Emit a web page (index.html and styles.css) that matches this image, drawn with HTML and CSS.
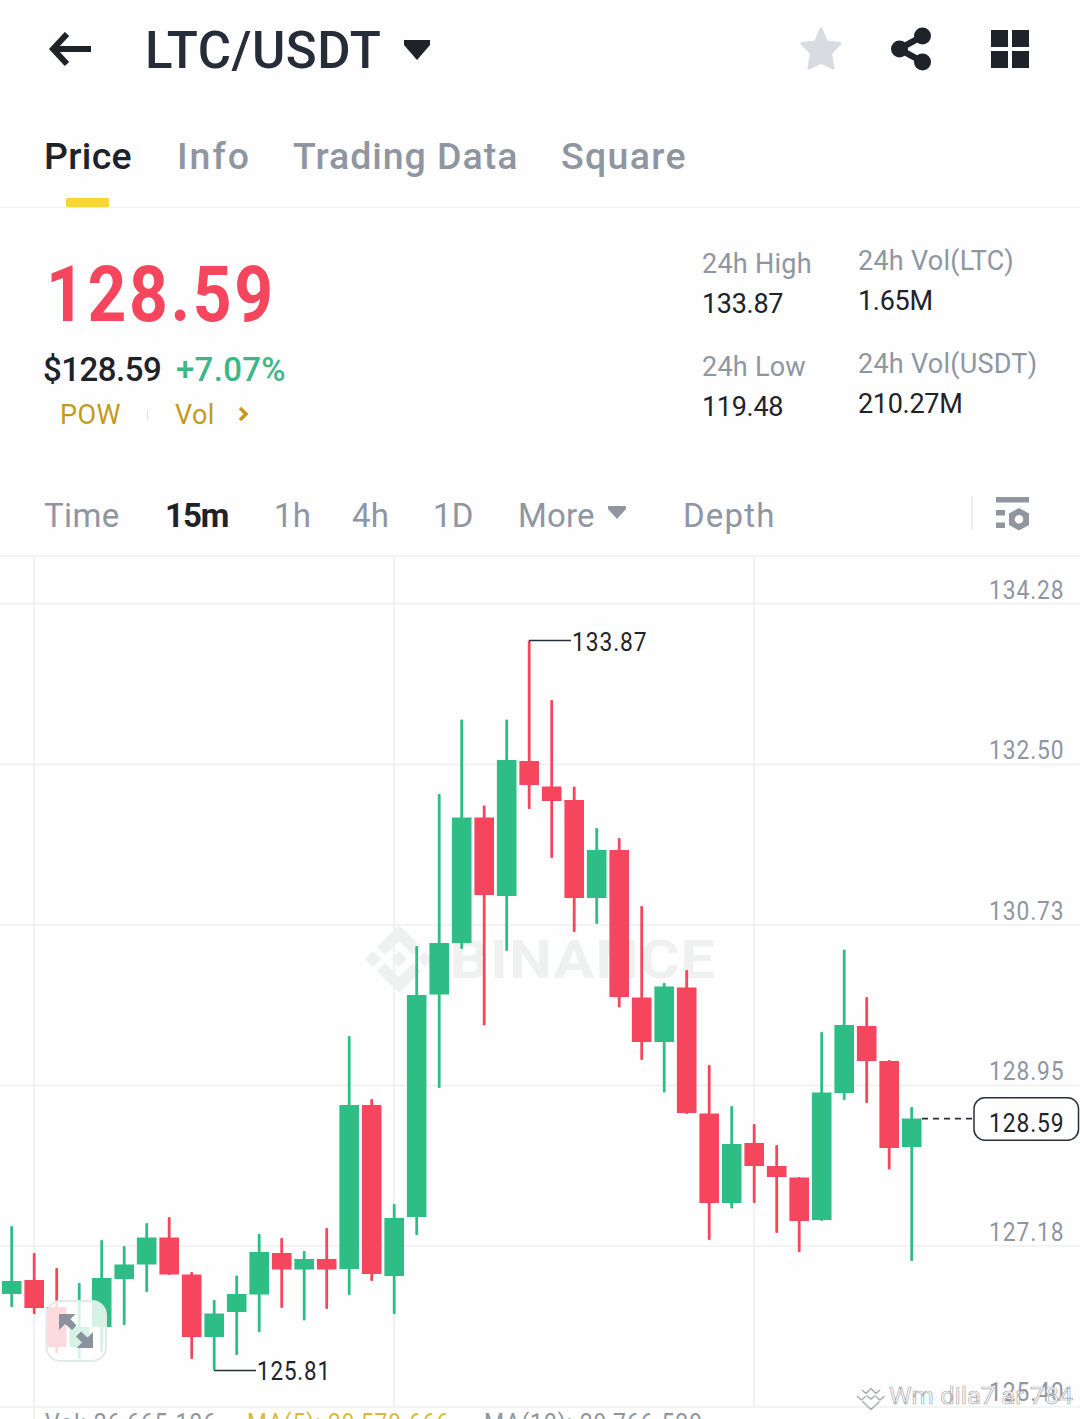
FILE: index.html
```html
<!DOCTYPE html>
<html lang="en">
<head>
<meta charset="utf-8">
<title>LTC/USDT</title>
<link rel="stylesheet" href="styles.css">
</head>
<body>
<header class="header">
  <svg class="back" viewBox="0 0 42 34" width="42" height="34"><path d="M18 2 4 17l14 15M4 17h38" fill="none" stroke="#1e2329" stroke-width="6"/></svg>
  <h1 class="pair">LTC/USDT</h1>
  <svg class="pair-caret" viewBox="0 0 26 20" width="26" height="20"><path d="M0 0h26v5L13 20 0 5z" fill="#1e2329"/></svg>
  <div class="actions">
    <svg viewBox="0 0 42 44" width="42" height="44"><path d="M21 2 26.500 15 40 16.500 30.500 26.500 33 41 21 35.500 9 41 11.500 26.500 2 16.500 15.500 15z" fill="#d8dce1" stroke="#d8dce1" stroke-width="3" stroke-linejoin="round"/></svg>
    <svg viewBox="0 0 40 44" width="40" height="44"><path d="M32 9 8 22l24 13" fill="none" stroke="#1e2329" stroke-width="6.500"/><g fill="#1e2329"><circle cx="31.500" cy="9" r="8.500"/><circle cx="8.500" cy="22" r="8.500"/><circle cx="31.500" cy="35" r="8.500"/></g></svg>
    <svg viewBox="0 0 38 38" width="38" height="38"><path d="M0 0h17v17H0zM21 0h17v17H21zM0 21h17v17H0zM21 21h17v17H21z" fill="#1e2329"/></svg>
  </div>
</header>

<nav class="tabs">
  <span class="tab tab-active">Price</span>
  <span class="tab tab-info">Info</span>
  <span class="tab tab-data">Trading Data</span>
  <span class="tab tab-square">Square</span>
</nav>

<section class="summary">
  <div class="quote">
    <div class="last">128.59</div>
    <div class="change"><span class="usd">$128.59</span><span class="pct">+7.07%</span></div>
    <div class="tags"><span class="tag-pow">POW</span><i class="tag-sep"></i><span class="tag-vol">Vol</span>
      <svg viewBox="0 0 11 16" width="11" height="16"><path d="M2 2l6 6-6 6" fill="none" stroke="#c29b1e" stroke-width="3.600"/></svg></div>
  </div>
  <div class="stats stats-range">
    <dl><dt>24h High</dt><dd>133.87</dd></dl>
    <dl><dt>24h Low</dt><dd>119.48</dd></dl>
  </div>
  <div class="stats stats-volume">
    <dl><dt>24h Vol(LTC)</dt><dd>1.65M</dd></dl>
    <dl><dt>24h Vol(USDT)</dt><dd>210.27M</dd></dl>
  </div>
</section>

<nav class="intervals">
  <span>Time</span>
  <span class="interval-active">15m</span>
  <span>1h</span>
  <span>4h</span>
  <span>1D</span>
  <span class="more">More <svg viewBox="0 0 18 13" width="18" height="13"><path d="M0 0h18v3L9 13 0 3z" fill="#8f96a0"/></svg></span>
  <span class="depth">Depth</span>
  <i class="divider"></i>
  <svg class="settings" viewBox="0 0 34 34" width="34" height="34"><g fill="#8f96a0"><path d="M0 0h33v5.500H0zM0 13h9v5.500H0zM0 25.500h9V31H0z"/><path fill-rule="evenodd" d="M23 11l10 5.500v11.500l-10 5.500-10-5.500V16.500zM23 18a4.300 4.300 0 1 0 0 8.600 4.300 4.300 0 0 0 0-8.600z"/></g></svg>
</nav>

<svg class="chart" viewBox="0 555 1080 864" width="1080" height="864">
  <path class="grid" d="M0 556H1080M0 603.500H1080M0 764.500H1080M0 925H1080M0 1085.500H1080M0 1246H1080M0 1407H1080M34 557V1419M394 557V1407M754 557V1407"/>
  <g class="brand">
    <path d="M399 925l22 22-8 8-14-14-14 14-8-8zM399 993l22-22-8-8-14 14-14-14-8 8zM399 951l8 8-8 8-8-8zM373 951l8 8-8 8-8-8zM425 951l8 8-8 8-8-8z"/>
    <text x="450" y="978" textLength="266" lengthAdjust="spacingAndGlyphs">BINANCE</text>
  </g>
  <g id="candles"></g>
  <g class="axis">
    <text x="989" y="598.500" textLength="75.500" lengthAdjust="spacingAndGlyphs">134.28</text>
    <text x="989" y="758.500" textLength="75.500" lengthAdjust="spacingAndGlyphs">132.50</text>
    <text x="989" y="919.500" textLength="75.500" lengthAdjust="spacingAndGlyphs">130.73</text>
    <text x="989" y="1079.500" textLength="75.500" lengthAdjust="spacingAndGlyphs">128.95</text>
    <text x="989" y="1240.500" textLength="75.500" lengthAdjust="spacingAndGlyphs">127.18</text>
    <text x="989" y="1400.500" textLength="75.500" lengthAdjust="spacingAndGlyphs">125.40</text>
    <text x="45" y="1431.500" textLength="172" lengthAdjust="spacingAndGlyphs">Vol: 26,665.106</text>
    <text class="ma5" x="247" y="1431.500" textLength="203" lengthAdjust="spacingAndGlyphs">MA(5): 29,579.666</text>
    <text x="484" y="1431.500" textLength="219" lengthAdjust="spacingAndGlyphs">MA(10): 29,766.529</text>
  </g>
  <path class="pointer" d="M529 640.500H571M214 1370.500H256"/>
  <path class="pointer dashed" d="M922 1118.700H973"/>
  <rect class="pricetag" x="974" y="1097.700" width="104.500" height="42.500" rx="11"/>
  <g class="mark">
    <text x="572" y="650.500" textLength="75.500" lengthAdjust="spacingAndGlyphs">133.87</text>
    <text x="257" y="1380" textLength="74" lengthAdjust="spacingAndGlyphs">125.81</text>
    <text x="989" y="1131.500" textLength="75.500" lengthAdjust="spacingAndGlyphs">128.59</text>
  </g>
  <rect class="expand" x="46.500" y="1301" width="59.500" height="60" rx="14"/>
  <path fill="#8b929d" d="M59 1314h16.500l-5 5 6 6.500-4.500 4.500-7-6-6 6zM93 1348H76.500l5.500-5.500-6-6 5-5 6.500 6 5.500-5.500z"/>
  <g class="author">
    <path d="M862 1390l4 3.500 5-5 5 5 4-3.500M857 1396l4.500 4 4-3.500M866.500 1395.500l4.500 3.500 4.500-3.500M876 1396.500l4 3.500 4.500-4M862.500 1401.500l8.500 8 8.500-8"/>
    <text x="889" y="1403.500" textLength="184" lengthAdjust="spacingAndGlyphs">Wm dila7 ar 784</text>
  </g>
</svg>
<script src="chart.js"></script>
</body>
</html>
```
FILE: styles.css
```css
* { box-sizing: border-box; margin: 0; padding: 0; }
body {
  width: 1080px;
  height: 1419px;
  overflow: hidden;
  background: #fefefe;
  color: #1e2329;
  font-family: Roboto, "Liberation Sans", sans-serif;
}
svg { display: block; flex: none; }

.header { display: flex; align-items: center; height: 97px; padding: 0 51px 0 49px; }
.pair { margin-left: 54px; padding-top: 5px; width: 236px; font-size: 51px; line-height: 60px; font-weight: 500; letter-spacing: 0.5px; color: #262c38; white-space: nowrap; }
.pair-caret { margin: 2px 0 0 23px; }
.actions { display: flex; align-items: center; margin-left: auto; }
.actions svg + svg { margin-left: 49px; }
.actions svg + svg + svg { margin-left: 60px; }

.tabs { display: grid; grid-template-columns: 132px 117px 268px 1fr; height: 111px; padding: 39px 0 0 44px; border-bottom: 1px solid #eef0f0; }
.tab { position: relative; font-size: 37.5px; line-height: 40px; font-weight: 500; color: #8f96a1; white-space: nowrap; }
.tab-active { color: #1e2329; letter-spacing: 0.3px; }
.tab-info { padding-left: 1px; letter-spacing: 2px; }
.tab-data { letter-spacing: 0.95px; }
.tab-square { letter-spacing: 1.3px; }
.tab-active::after { content: ""; position: absolute; left: 22px; bottom: 0; width: 43px; height: 9px; border-radius: 1px; background: #fad536; }

.summary { display: flex; height: 267px; padding: 36px 0 0 43px; }
.quote { width: 659px; padding-top: 11px; }
.last { margin-left: 3px; font-size: 77px; line-height: 80px; font-weight: 700; color: #f6465d; transform: scaleX(0.88); transform-origin: 0 0; letter-spacing: 3px; }
.change { display: flex; margin-top: 15px; font-size: 33px; line-height: 40px; font-weight: 500; }
.usd { width: 133px; letter-spacing: -0.5px; }
.pct { color: #3fb688; letter-spacing: 0.3px; }
.tags { display: flex; align-items: center; margin-top: 10px; padding-left: 17px; font-size: 27px; line-height: 30px; color: #c29b1e; }
.tag-pow { width: 87px; letter-spacing: 0.5px; }
.tag-sep { width: 1px; height: 10px; background: #dfe2e4; }
.tag-vol { width: 90px; padding-left: 27px; letter-spacing: 0.4px; }
.tags svg { margin-top: -2px; }

.stats { display: flex; flex-direction: column; gap: 23px; line-height: 40px; font-size: 27px; white-space: nowrap; }
.stats dt { color: #8f96a1; letter-spacing: 0.25px; }
.stats dd { letter-spacing: -0.3px; }
.stats-range { width: 156px; }
.stats-volume { margin-top: -3px; }

.intervals { display: flex; align-items: center; height: 80px; padding: 0 0 0 44px; font-size: 33px; color: #8f96a1; white-space: nowrap; }
.intervals span { width: 78px; letter-spacing: 0.2px; }
.intervals span:nth-child(1) { width: 121px; letter-spacing: 0.4px; }
.intervals span:nth-child(2) { width: 109px; }
.intervals span:nth-child(4) { width: 81px; }
.intervals span:nth-child(5) { width: 85px; }
.intervals .more { display: flex; align-items: center; gap: 13px; width: 165px; }
.intervals .interval-active { color: #1e2329; font-weight: 700; letter-spacing: -1px; }
.more svg { margin-top: -6px; }
.intervals .depth { width: 288px; letter-spacing: 1.2px; }
.divider { width: 2px; height: 34px; margin-top: -4px; background: #ebedee; }
.settings { margin: -3px 0 0 23px; }

.chart { font-size: 25px; letter-spacing: 1px; }
.grid { fill: none; stroke: #eef0f0; stroke-width: 1.7px; }
.brand { fill: #eff0f0; font-size: 53px; font-weight: 700; }
.up { fill: #2ebd85; }
.down { fill: #f6465d; }
.axis { fill: #8f96a1; }
.ma5 { fill: #d9b93c; }
.mark { fill: #1e2329; }
.pointer { fill: none; stroke: #2a303b; stroke-width: 1.7px; }
.dashed { stroke-dasharray: 6 5; }
.pricetag { fill: #fefefe; stroke: #2a303b; stroke-width: 1.5px; }
.expand { fill: #fff; fill-opacity: 0.8; stroke: #e3e9e8; stroke-width: 2px; }
.author { fill: #fff; stroke: #a9adb2; stroke-width: 0.7px; font-size: 24px; letter-spacing: 0; }
.author path { fill: none; stroke-width: 1.5px; }
```
FILE: chart.js
```js
// Each candle: direction, high, body top, body bottom, low (chart units)
const candles = [
  ["up",1226,1281,1294,1307],["down",1253,1280,1308,1314],["down",1268,1307,1347,1353],
  ["up",1283,1327,1347,1359],["up",1240,1278,1327,1352],["up",1246,1264.5,1279,1325],
  ["up",1223,1237.5,1264.5,1292],["down",1217,1237.5,1274.5,1275],["down",1272,1274.5,1337,1359],
  ["up",1300,1313.5,1337,1370],["up",1275.5,1294,1312,1355],["up",1234,1252,1294.5,1332],
  ["down",1238,1253,1269.5,1308],["up",1251,1259,1269.5,1320.5],["down",1228,1259,1269.5,1309],
  ["up",1036,1105,1269,1295],["down",1099,1105,1274,1281],["up",1204,1218,1276,1314],
  ["up",946,995,1217,1235],["up",794,943,994.5,1088],["up",719.5,817.5,943,949],
  ["down",805.5,817.5,895,1025.5],["up",719.5,760,896,951],["down",640.5,761,785,809],
  ["down",700,786.5,801,858],["down",786.5,800,898,932],["up",828,850,898,924],
  ["down",838,850,997,1007.5],["down",906,997.5,1042,1060],["up",983,986.5,1042,1092.5],
  ["down",970,987.5,1113,1114],["down",1065,1113.5,1203,1240],["up",1106,1144,1203,1208.5],
  ["down",1124,1143,1166,1203],["down",1145,1166,1177,1233],["down",1177,1177.5,1221,1252],
  ["up",1032,1092.5,1220,1221],["up",949.5,1025,1093,1100],["down",997,1026,1061,1103],
  ["down",1060,1061,1148,1169.5],["up",1107,1118.5,1147,1261]
];
document.getElementById("candles").innerHTML = candles.map(([dir, high, top, bottom, low], i) => {
  const x = 11.7 + 22.5 * i;
  return `<g class="${dir}"><rect x="${x - 1.4}" y="${high}" width="2.8" height="${low - high}" rx="1"/>` +
    `<rect x="${x - 9.8}" y="${top}" width="19.6" height="${bottom - top}"/></g>`;
}).join("");
```
